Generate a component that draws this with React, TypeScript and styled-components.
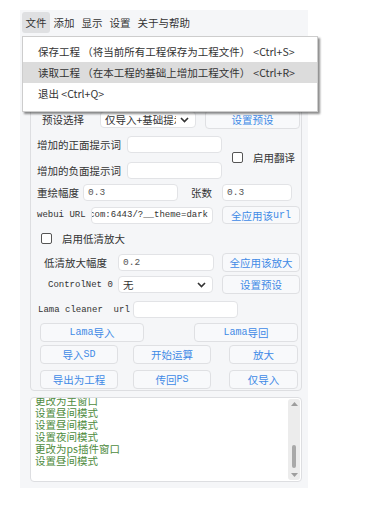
import styled, { createGlobalStyle } from 'styled-components';

const GlobalStyle = createGlobalStyle`
  body {
    margin: 0;
    background: #ffffff;
    font-family: "Noto Sans CJK SC", "Noto Sans", sans-serif;
  }
`;

const Window = styled.div`
  position: relative;
  margin: 10px 0 0 20px;
  width: 288px;
  height: 478px;
  background: #f5f6f8;
  box-sizing: border-box;
  display: flex;
  flex-direction: column;
`;

const MenuBar = styled.div`
  display: flex;
  align-items: center;
  height: 24px;
  padding-left: 2px;
`;

const MenuItem = styled.div<{ $active?: boolean }>`
  height: 21px;
  line-height: 21px;
  padding: 0 3.5px;
  font-size: 10.5px;
  color: #333;
  border-radius: 3px;
  background: ${({ $active }) => ($active ? '#dfe0e2' : 'transparent')};
`;

const Dropdown = styled.div`
  position: absolute;
  left: 2px;
  top: 26px;
  width: 296px;
  height: 76px;
  box-sizing: border-box;
  padding-top: 4px;
  background: #fff;
  border: 1px solid #cdcdcd;
  box-shadow: 2px 2px 2px rgba(0, 0, 0, 0.45);
  z-index: 5;
`;

const DropItem = styled.div<{ $active?: boolean }>`
  display: flex;
  align-items: center;
  height: 21px;
  padding-left: 15px;
  font-size: 10.5px;
  color: #333;
  white-space: nowrap;
  background: ${({ $active }) => ($active ? '#dcdcdc' : 'transparent')};
`;

const Shortcut = styled.span`
  margin-left: 3px;
`;

const Group = styled.div`
  margin: 70px 0 0 10px;
  width: 272px;
  box-sizing: border-box;
  border: 1px solid #dddee1;
  border-radius: 4px;
  padding-bottom: 1px;
  display: flex;
  flex-direction: column;
`;

const Row = styled.div<{ $h: number; $mt: number }>`
  display: flex;
  align-items: center;
  height: ${({ $h }) => $h}px;
  margin-top: ${({ $mt }) => $mt}px;
`;

const PromptBlock = styled.div`
  display: flex;
  align-items: center;
  margin-top: 7px;
`;

const PromptColumn = styled.div`
  display: flex;
  flex-direction: column;
  gap: 9px;
`;

const Label = styled.span<{ $w: number; $ml?: number; $mono?: boolean }>`
  flex-shrink: 0;
  width: ${({ $w }) => $w}px;
  margin-left: ${({ $ml }) => $ml ?? 0}px;
  font-size: ${({ $mono }) => ($mono ? '9px' : '10.5px')};
  font-family: ${({ $mono }) =>
    $mono ? '"Liberation Mono", "DejaVu Sans Mono", monospace' : 'inherit'};
  color: #333;
  white-space: pre;
`;

const Field = styled.div<{ $w: number; $ml?: number; $end?: boolean }>`
  flex-shrink: 0;
  display: flex;
  align-items: center;
  justify-content: ${({ $end }) => ($end ? 'flex-end' : 'flex-start')};
  width: ${({ $w }) => $w}px;
  margin-left: ${({ $ml }) => $ml ?? 0}px;
  height: 17px;
  box-sizing: border-box;
  padding: 0 4px;
  background: #fff;
  border: 1px solid #e2e3e6;
  border-radius: 4px;
  overflow: hidden;
  font-size: 10.5px;
  color: #333;
`;

const MonoValue = styled.span<{ $dark?: boolean }>`
  flex-shrink: 0;
  font-family: "Liberation Mono", "DejaVu Sans Mono", monospace;
  font-size: ${({ $dark }) => ($dark ? '9px' : '9.5px')};
  color: ${({ $dark }) => ($dark ? '#333' : '#555')};
  white-space: nowrap;
`;

const ComboText = styled.span`
  flex: 1;
  min-width: 0;
  overflow: hidden;
  white-space: nowrap;
`;

const Chevron = styled.svg`
  flex-shrink: 0;
  margin: 0 2px 0 4px;
`;

const Button = styled.div<{ $w: number; $ml?: number }>`
  flex-shrink: 0;
  display: flex;
  align-items: center;
  justify-content: center;
  width: ${({ $w }) => $w}px;
  margin-left: ${({ $ml }) => $ml ?? 0}px;
  height: 100%;
  box-sizing: border-box;
  background: #f8f9fb;
  border: 1px solid #dfe0e3;
  border-radius: 4px;
  font-size: 10.5px;
  color: #3f8ae6;
  white-space: nowrap;
`;

const Latin = styled.span`
  font-family: "Liberation Mono", "DejaVu Sans Mono", monospace;
  font-size: 10px;
`;

const Check = styled.div<{ $ml: number }>`
  display: flex;
  align-items: center;
  margin-left: ${({ $ml }) => $ml}px;
  font-size: 10.5px;
  color: #333;
`;

const Box = styled.span`
  width: 11px;
  height: 11px;
  box-sizing: border-box;
  border: 1.5px solid #555;
  border-radius: 2px;
  background: #fff;
  margin-right: 10px;
`;

const LogBox = styled.div`
  display: flex;
  margin: 6px 0 0 10px;
  width: 272px;
  height: 85px;
  box-sizing: border-box;
  background: #fff;
  border: 1px solid #dddee1;
  border-radius: 4px;
`;

const LogText = styled.div`
  flex: 1;
  overflow: hidden;
  padding-left: 4px;
`;

const LogLines = styled.div`
  margin-top: -3px;
  font-size: 10.5px;
  line-height: 11.9px;
  color: #4e8b3e;
`;

const ScrollTrack = styled.div`
  display: flex;
  flex-direction: column;
  align-items: center;
  width: 12px;
  margin: 1px 1px 1px 0;
  padding: 3px 0;
  box-sizing: border-box;
  background: #ececec;
  border-radius: 3px;
`;

const Thumb = styled.div`
  width: 4px;
  height: 23px;
  margin-top: 39px;
  margin-bottom: auto;
  border-radius: 2px;
  background: #a9a9a9;
`;

const ChevronDown = () => (
  <Chevron width="9" height="6" viewBox="0 0 9 6">
    <polyline points="1,1 4.5,4.6 8,1" fill="none" stroke="#333" strokeWidth="1.6" />
  </Chevron>
);

const logs = ['更改为主窗口', '设置昼间模式', '设置昼间模式', '设置夜间模式', '更改为ps插件窗口', '设置昼间模式'];

export default function App() {
  return (
    <>
      <GlobalStyle />
      <Window>
        <MenuBar>
          <MenuItem $active>文件</MenuItem>
          <MenuItem>添加</MenuItem>
          <MenuItem>显示</MenuItem>
          <MenuItem>设置</MenuItem>
          <MenuItem>关于与帮助</MenuItem>
        </MenuBar>

        <Dropdown>
          <DropItem>
            保存工程 （将当前所有工程保存为工程文件）<Shortcut>&lt;Ctrl+S&gt;</Shortcut>
          </DropItem>
          <DropItem $active>
            读取工程 （在本工程的基础上增加工程文件）<Shortcut>&lt;Ctrl+R&gt;</Shortcut>
          </DropItem>
          <DropItem>退出 &lt;Ctrl+Q&gt;</DropItem>
        </Dropdown>

        <Group>
          <Row $h={19} $mt={5}>
            <Label $w={58} $ml={11}>预设选择</Label>
            <Field $w={96}>
              <ComboText>仅导入+基础提示</ComboText>
              <ChevronDown />
            </Field>
            <Button $w={95} $ml={9}>设置预设</Button>
          </Row>

          <PromptBlock>
            <PromptColumn>
              <Row $h={17} $mt={0}>
                <Label $w={90} $ml={6}>增加的正面提示词</Label>
                <Field $w={95} />
              </Row>
              <Row $h={17} $mt={0}>
                <Label $w={90} $ml={6}>增加的负面提示词</Label>
                <Field $w={95} />
              </Row>
            </PromptColumn>
            <Check $ml={10}>
              <Box />
              启用翻译
            </Check>
          </PromptBlock>

          <Row $h={17} $mt={5}>
            <Label $w={46} $ml={6}>重绘幅度</Label>
            <Field $w={95}>
              <MonoValue>0.3</MonoValue>
            </Field>
            <Label $w={31} $ml={13}>张数</Label>
            <Field $w={70}>
              <MonoValue>0.3</MonoValue>
            </Field>
          </Row>

          <Row $h={18} $mt={5}>
            <Label $w={54} $ml={6} $mono>webui URL</Label>
            <Field $w={122} $end>
              <MonoValue $dark>com:6443/?__theme=dark</MonoValue>
            </Field>
            <Button $w={78} $ml={9}>
              全应用该<Latin>url</Latin>
            </Button>
          </Row>

          <Row $h={15} $mt={7}>
            <Check $ml={10}>
              <Box />
              启用低清放大
            </Check>
          </Row>

          <Row $h={19} $mt={7}>
            <Label $w={74} $ml={13}>低清放大幅度</Label>
            <Field $w={96}>
              <MonoValue>0.2</MonoValue>
            </Field>
            <Button $w={78} $ml={8}>全应用该放大</Button>
          </Row>

          <Row $h={19} $mt={3}>
            <Label $w={70} $ml={17} $mono>ControlNet 0</Label>
            <Field $w={95}>
              <ComboText>无</ComboText>
              <ChevronDown />
            </Field>
            <Button $w={78} $ml={9}>设置预设</Button>
          </Row>

          <Row $h={17} $mt={7}>
            <Label $w={95} $ml={7} $mono>Lama cleaner  url</Label>
            <Field $w={105} />
          </Row>

          <Row $h={19} $mt={5}>
            <Button $w={104} $ml={9}>
              <Latin>Lama</Latin>导入
            </Button>
            <Button $w={104} $ml={50}>
              <Latin>Lama</Latin>导回
            </Button>
          </Row>

          <Row $h={19} $mt={3}>
            <Button $w={78} $ml={9}>
              导入<Latin>SD</Latin>
            </Button>
            <Button $w={78} $ml={15}>开始运算</Button>
            <Button $w={69} $ml={18}>放大</Button>
          </Row>

          <Row $h={19} $mt={6}>
            <Button $w={78} $ml={9}>导出为工程</Button>
            <Button $w={78} $ml={15}>
              传回<Latin>PS</Latin>
            </Button>
            <Button $w={69} $ml={18}>仅导入</Button>
          </Row>
        </Group>

        <LogBox>
          <LogText>
            <LogLines>
              {logs.map((line, i) => (
                <div key={i}>{line}</div>
              ))}
            </LogLines>
          </LogText>
          <ScrollTrack>
            <svg width="7" height="4" viewBox="0 0 7 4">
              <polygon points="0,4 3.5,0 7,4" fill="#9d9d9d" />
            </svg>
            <Thumb />
            <svg width="7" height="4" viewBox="0 0 7 4">
              <polygon points="0,0 3.5,4 7,0" fill="#9d9d9d" />
            </svg>
          </ScrollTrack>
        </LogBox>
      </Window>
    </>
  );
}
